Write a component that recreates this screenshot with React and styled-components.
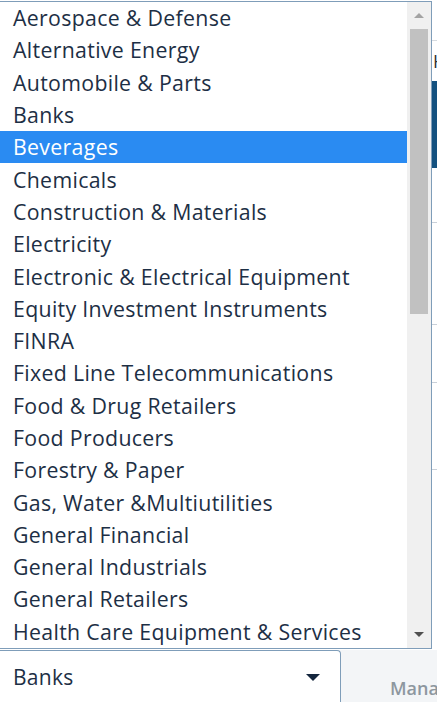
import React from 'react';
import styled, { createGlobalStyle } from 'styled-components';

const sectors = [
  'Aerospace & Defense',
  'Alternative Energy',
  'Automobile & Parts',
  'Banks',
  'Beverages',
  'Chemicals',
  'Construction & Materials',
  'Electricity',
  'Electronic & Electrical Equipment',
  'Equity Investment Instruments',
  'FINRA',
  'Fixed Line Telecommunications',
  'Food & Drug Retailers',
  'Food Producers',
  'Forestry & Paper',
  'Gas, Water &Multiutilities',
  'General Financial',
  'General Industrials',
  'General Retailers',
  'Health Care Equipment & Services'
];

const GlobalStyle = createGlobalStyle`
  html, body {
    margin: 0;
    padding: 0;
    background: #f3f5f7;
  }
  * {
    box-sizing: border-box;
  }
`;

const Page = styled.div`
  position: relative;
  width: 437px;
  height: 702px;
  overflow: hidden;
  background: #f3f5f7;
  font-family: 'Open Sans', 'Noto Sans', sans-serif;
`;

const Body = styled.div`
  display: flex;
  flex-direction: column;
  height: 100%;
`;

const Content = styled.div`
  flex: 1;
  display: grid;
  grid-template-columns: 432px 1fr;
  background: #fff;
`;

const Side = styled.div`
  display: flex;
  flex-direction: column;
  padding-top: 40px;
  border-top: 1px solid #d6dbe0;
  margin-top: 40px;
`;

const SideLetter = styled.div`
  height: 40px;
  font-size: 18px;
  line-height: 40px;
  color: #333;
  margin-left: 1px;
  margin-top: -40px;
`;

const SideBlock = styled.div`
  height: ${p => p.h}px;
  background: ${p => p.bg || 'transparent'};
  border-bottom: ${p => (p.line ? '1px solid #c9d0d8' : 'none')};
`;

const Footer = styled.div`
  display: flex;
  height: 52px;
`;

const Select = styled.div`
  width: 341px;
  display: flex;
  align-items: center;
  justify-content: space-between;
  padding: 0 20px 0 13px;
  background: #fff;
  border: 1px solid #7f9db9;
  border-left: none;
  border-bottom: none;
  border-top-right-radius: 4px;
  font-size: 21px;
  font-weight: 500;
  letter-spacing: 0.3px;
  color: #1d2f45;
`;

const Caret = styled.span`
  width: 0;
  height: 0;
  border-left: 7px solid transparent;
  border-right: 7px solid transparent;
  border-top: 7px solid #14263d;
  margin-top: 2px;
`;

const FooterRest = styled.div`
  flex: 1;
  display: flex;
  align-items: flex-end;
  padding: 0 0 2px 49px;
  font-size: 18px;
  font-weight: 600;
  color: #8d979f;
  white-space: nowrap;
  overflow: hidden;
`;

const ListBox = styled.div`
  position: absolute;
  top: 1px;
  left: -1px;
  width: 433px;
  height: 648px;
  display: flex;
  background: #fff;
  border: 1px solid #7f9db9;
`;

const Options = styled.ul`
  flex: 1;
  margin: 0;
  padding: 0;
  list-style: none;
  overflow: hidden;
`;

const Option = styled.li`
  height: 32.3px;
  display: flex;
  align-items: center;
  padding: 0 0 1px 13px;
  font-size: 21.3px;
  font-weight: 500;
  letter-spacing: 0.32px;
  white-space: nowrap;
  color: ${p => (p.active ? '#fff' : '#1d2f45')};
  background: ${p => (p.active ? '#2a8bf2' : 'transparent')};
`;

const Scrollbar = styled.div`
  width: 24px;
  display: flex;
  flex-direction: column;
  align-items: center;
  background: #f0f0f0;
`;

const Arrow = styled.div`
  height: 27px;
  display: flex;
  align-items: center;
  justify-content: center;
  flex-shrink: 0;
`;

const Tri = styled.span`
  width: 0;
  height: 0;
  border-left: 5px solid transparent;
  border-right: 5px solid transparent;
  ${p =>
    p.up
      ? 'border-bottom: 5px solid #a3a3a3;'
      : 'border-top: 5px solid #505050;'}
`;

const Track = styled.div`
  flex: 1;
  width: 100%;
  padding: 0 3px;
`;

const Thumb = styled.div`
  height: 285px;
  background: #c1c1c1;
`;

export default function App() {
  return (
    <Page>
      <GlobalStyle />
      <Body>
        <Content>
          <div />
          <Side>
            <SideLetter>H</SideLetter>
            <SideBlock h={87} bg="#14517f" />
            <SideBlock h={55} line />
            <SideBlock h={102} line />
            <SideBlock h={58} line />
            <SideBlock h={87} line />
          </Side>
        </Content>
        <Footer>
          <Select>
            <span>Banks</span>
            <Caret />
          </Select>
          <FooterRest>Mana</FooterRest>
        </Footer>
      </Body>

      <ListBox>
        <Options>
          {sectors.map(s => (
            <Option key={s} active={s === 'Beverages'}>
              {s}
            </Option>
          ))}
        </Options>
        <Scrollbar>
          <Arrow>
            <Tri up />
          </Arrow>
          <Track>
            <Thumb />
          </Track>
          <Arrow>
            <Tri />
          </Arrow>
        </Scrollbar>
      </ListBox>
    </Page>
  );
}
